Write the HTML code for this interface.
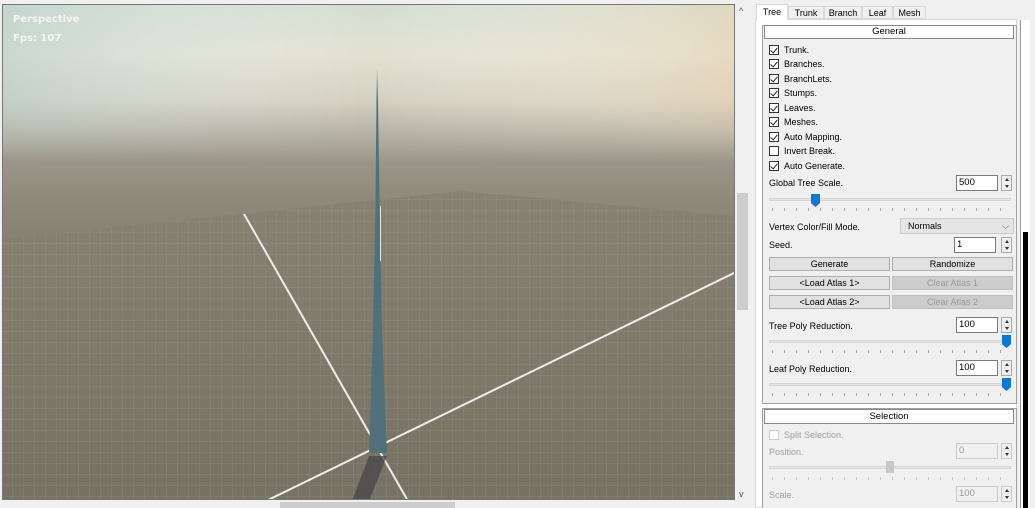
<!DOCTYPE html>
<html><head><meta charset="utf-8"><style>
*{margin:0;padding:0;box-sizing:border-box}
body{width:1035px;height:508px;background:#f0f0f0;position:relative;overflow:hidden;font-family:"Liberation Sans",sans-serif;font-size:9px;color:#000}
.a{position:absolute}
.cb{position:absolute;left:769px;width:10px;height:10px;border:1px solid #333;background:#fff}
.cb.k::after{content:"";position:absolute;left:2px;top:0px;width:3px;height:6px;border:solid #222;border-width:0 1px 1px 0;transform:rotate(40deg)}
.lbl{position:absolute;left:784px;font-size:9px;line-height:10px}
.btn{position:absolute;height:14px;background:#e1e1e1;border:1px solid #adadad;text-align:center;line-height:12px;font-size:9px}
.btn.d{background:#cccccc;border-color:#bfbfbf;color:#9a9a9a}
.num{position:absolute;height:16px;width:42px;border:1px solid #7a7a7a;background:#fff;padding-left:2px;line-height:14px;font-size:9.5px}
.spin{position:absolute;width:11px;height:16px;border:1px solid #aaa;background:#f0f0f0}
.spin::before{content:"";position:absolute;left:3px;top:2px;border:2.5px solid transparent;border-bottom:3px solid #333;border-top:0}
.spin::after{content:"";position:absolute;left:3px;top:9px;border:2.5px solid transparent;border-top:3px solid #333;border-bottom:0}
.track{position:absolute;left:769px;width:242px;height:3px;background:#e6e6e6;border:1px solid #d6d6d6}
.ticks{position:absolute;left:772px;width:236px;height:3px;background:repeating-linear-gradient(90deg,#aaa 0 1px,transparent 1px 12px)}
.thumb{position:absolute;width:9px;height:13px;background:#0a78d7;clip-path:polygon(0 0,100% 0,100% 70%,50% 100%,0 70%)}
</style></head><body>
<div class="a" style="left:2px;top:4px;width:733px;height:496px;border:1px solid #777;overflow:hidden">
<svg width="733" height="496" viewBox="2 4 733 496" style="display:block">
<defs>
<linearGradient id="sky" x1="0" y1="0" x2="0" y2="1">
<stop offset="0" stop-color="#d3ddd2"/><stop offset="0.2" stop-color="#e2e2d3"/><stop offset="0.38" stop-color="#d4d1c2"/><stop offset="0.5" stop-color="#b8b5a8"/><stop offset="0.62" stop-color="#9a9588"/><stop offset="0.8" stop-color="#8c8778"/><stop offset="1" stop-color="#837d6e"/></linearGradient>
<linearGradient id="skyh" x1="0" y1="0" x2="1" y2="0">
<stop offset="0" stop-color="#b4cfcc" stop-opacity=".55"/><stop offset="0.5" stop-color="#fff" stop-opacity="0"/><stop offset="1" stop-color="#ead2ae" stop-opacity=".55"/></linearGradient>
<linearGradient id="fade" x1="0" y1="0" x2="0" y2="1"><stop offset="0" stop-color="#fff"/><stop offset="0.6" stop-color="#fff"/><stop offset="1" stop-color="#000"/></linearGradient>
<mask id="m"><rect x="0" y="0" width="740" height="160" fill="url(#fade)"/></mask>
<linearGradient id="gnd" x1="0" y1="0" x2="0" y2="1"><stop offset="0" stop-color="#878272"/><stop offset="1" stop-color="#777163"/></linearGradient>
<pattern id="grid" width="11" height="11" patternUnits="userSpaceOnUse"><path d="M0 0H11M0 0V11" stroke="#a9a598" stroke-width="1" fill="none" opacity=".35"/></pattern>
</defs>
<rect x="0" y="0" width="740" height="260" fill="url(#sky)"/>
<rect x="0" y="0" width="740" height="160" fill="url(#skyh)" mask="url(#m)"/>
<polygon points="0,238 460,190 735,215 735,500 0,500" fill="url(#gnd)"/>
<polygon points="0,238 460,190 735,215 735,500 0,500" fill="url(#grid)"/>
<line x1="243" y1="213" x2="407" y2="500" stroke="#eeeeee" stroke-width="2"/>
<line x1="735" y1="271" x2="265" y2="500" stroke="#eeeeee" stroke-width="2"/>
<polygon points="368,455 386,455 368,500 351,500" fill="#4a484a" opacity=".8"/>
<polygon points="376,68 377,100 378.5,200 381,330 386,452 368,452 372,330 374.5,200 375.5,100" fill="#50707a"/>
<line x1="379.5" y1="205" x2="379.5" y2="260" stroke="#e8e8e8" stroke-width="1"/>
<text x="12" y="21" fill="#f4f4f4" font-size="10" font-weight="bold" font-family="DejaVu Sans">Perspective</text>
<text x="12" y="40" fill="#f4f4f4" font-size="10" font-weight="bold" font-family="DejaVu Sans">Fps: 107</text>
</svg></div>
<div class="a" style="left:735px;top:4px;width:15px;height:496px;background:#f0f0f0"></div>
<div class="a" style="left:737px;top:193px;width:11px;height:117px;background:#cdcdcd"></div>
<div class="a" style="left:739px;top:6px;font-size:9px;color:#555">^</div>
<div class="a" style="left:739px;top:489px;font-size:9px;color:#555">v</div>
<div class="a" style="left:0;top:500px;width:750px;height:8px;background:#f0f0f0"></div>
<div class="a" style="left:280px;top:502px;width:175px;height:6px;background:#cdcdcd"></div>
<div class="a" style="left:755px;top:19px;width:262px;height:489px;border:1px solid #d9d9d9;background:#fff"></div>
<div class="a" style="left:756px;top:4px;width:32px;height:16px;background:#fff;border:1px solid #d9d9d9;border-bottom:none;text-align:center;line-height:14px">Tree</div>
<div class="a" style="left:788px;top:6px;width:36px;height:13px;background:#f0f0f0;border:1px solid #d9d9d9;text-align:center;line-height:12px">Trunk</div>
<div class="a" style="left:824px;top:6px;width:38px;height:13px;background:#f0f0f0;border:1px solid #d9d9d9;text-align:center;line-height:12px">Branch</div>
<div class="a" style="left:862px;top:6px;width:31px;height:13px;background:#f0f0f0;border:1px solid #d9d9d9;text-align:center;line-height:12px">Leaf</div>
<div class="a" style="left:893px;top:6px;width:33px;height:13px;background:#f0f0f0;border:1px solid #d9d9d9;text-align:center;line-height:12px">Mesh</div>
<div class="a" style="left:1020px;top:20px;width:10px;height:488px;border-left:1px solid #999;background:#fff"></div>
<div class="a" style="left:1023px;top:232px;width:5px;height:276px;background:#000"></div>
<div class="a" style="left:762px;top:25px;width:255px;height:379px;border:1px solid #a0a0a0;background:#f0f0f0"></div>
<div class="a" style="left:764px;top:25px;width:250px;height:14px;border:1px solid #888;background:#fff;text-align:center;line-height:12px;font-size:9.5px">General</div>
<div class="cb k" style="top:45px"></div><div class="lbl" style="top:45px">Trunk.</div>
<div class="cb k" style="top:59px"></div><div class="lbl" style="top:59px">Branches.</div>
<div class="cb k" style="top:74px"></div><div class="lbl" style="top:74px">BranchLets.</div>
<div class="cb k" style="top:88px"></div><div class="lbl" style="top:88px">Stumps.</div>
<div class="cb k" style="top:103px"></div><div class="lbl" style="top:103px">Leaves.</div>
<div class="cb k" style="top:117px"></div><div class="lbl" style="top:117px">Meshes.</div>
<div class="cb k" style="top:132px"></div><div class="lbl" style="top:132px">Auto Mapping.</div>
<div class="cb" style="top:146px"></div><div class="lbl" style="top:146px">Invert Break.</div>
<div class="cb k" style="top:161px"></div><div class="lbl" style="top:161px">Auto Generate.</div>
<div class="a" style="left:769px;top:178px">Global Tree Scale.</div>
<div class="num" style="left:956px;top:175px">500</div><div class="spin" style="left:1001px;top:175px"></div>
<div class="track" style="top:198px"></div><div class="ticks" style="top:208px"></div>
<div class="thumb" style="left:811px;top:194px"></div>
<div class="a" style="left:769px;top:222px">Vertex Color/Fill Mode.</div>
<div class="a" style="left:900px;top:218px;width:114px;height:16px;background:#e5e5e5;border:1px solid #ccc;line-height:14px;padding-left:7px">Normals<span style="position:absolute;right:4px;color:#555">⌵</span></div>
<div class="a" style="left:769px;top:240px">Seed.</div>
<div class="num" style="left:954px;top:237px">1</div><div class="spin" style="left:1001px;top:237px"></div>
<div class="btn" style="left:769px;top:257px;width:121px">Generate</div>
<div class="btn" style="left:892px;top:257px;width:121px">Randomize</div>
<div class="btn" style="left:769px;top:276px;width:121px">&lt;Load Atlas 1&gt;</div>
<div class="btn d" style="left:892px;top:276px;width:121px">Clear Atlas 1</div>
<div class="btn" style="left:769px;top:295px;width:121px">&lt;Load Atlas 2&gt;</div>
<div class="btn d" style="left:892px;top:295px;width:121px">Clear Atlas 2</div>
<div class="a" style="left:769px;top:321px">Tree Poly Reduction.</div>
<div class="num" style="left:956px;top:317px">100</div><div class="spin" style="left:1001px;top:317px"></div>
<div class="track" style="top:340px"></div><div class="ticks" style="top:350px"></div>
<div class="thumb" style="left:1002px;top:335px"></div>
<div class="a" style="left:769px;top:364px">Leaf Poly Reduction.</div>
<div class="num" style="left:956px;top:360px">100</div><div class="spin" style="left:1001px;top:360px"></div>
<div class="track" style="top:383px"></div><div class="ticks" style="top:393px"></div>
<div class="thumb" style="left:1002px;top:378px"></div>
<div class="a" style="left:762px;top:408px;width:255px;height:100px;border:1px solid #a0a0a0;border-bottom:none;background:#f0f0f0"></div>
<div class="a" style="left:764px;top:409px;width:250px;height:15px;border:1px solid #888;background:#fff;text-align:center;line-height:13px;font-size:9.5px">Selection</div>
<div class="cb" style="top:430px;border-color:#ccc"></div><div class="lbl" style="top:430px;color:#a0a0a0">Split Selection.</div>
<div class="a" style="left:769px;top:447px;color:#a0a0a0">Position.</div>
<div class="num" style="left:956px;top:443px;border-color:#ccc;background:#f0f0f0;color:#999">0</div><div class="spin" style="left:1001px;top:443px;border-color:#ccc"></div>
<div class="track" style="top:466px"></div><div class="ticks" style="top:477px;opacity:.6"></div>
<div class="a" style="left:886px;top:461px;width:8px;height:12px;background:#c8c8c8"></div>
<div class="a" style="left:769px;top:490px;color:#a0a0a0">Scale.</div>
<div class="num" style="left:956px;top:486px;border-color:#ccc;background:#f0f0f0;color:#999">100</div><div class="spin" style="left:1001px;top:486px;border-color:#ccc"></div>
</body></html>
